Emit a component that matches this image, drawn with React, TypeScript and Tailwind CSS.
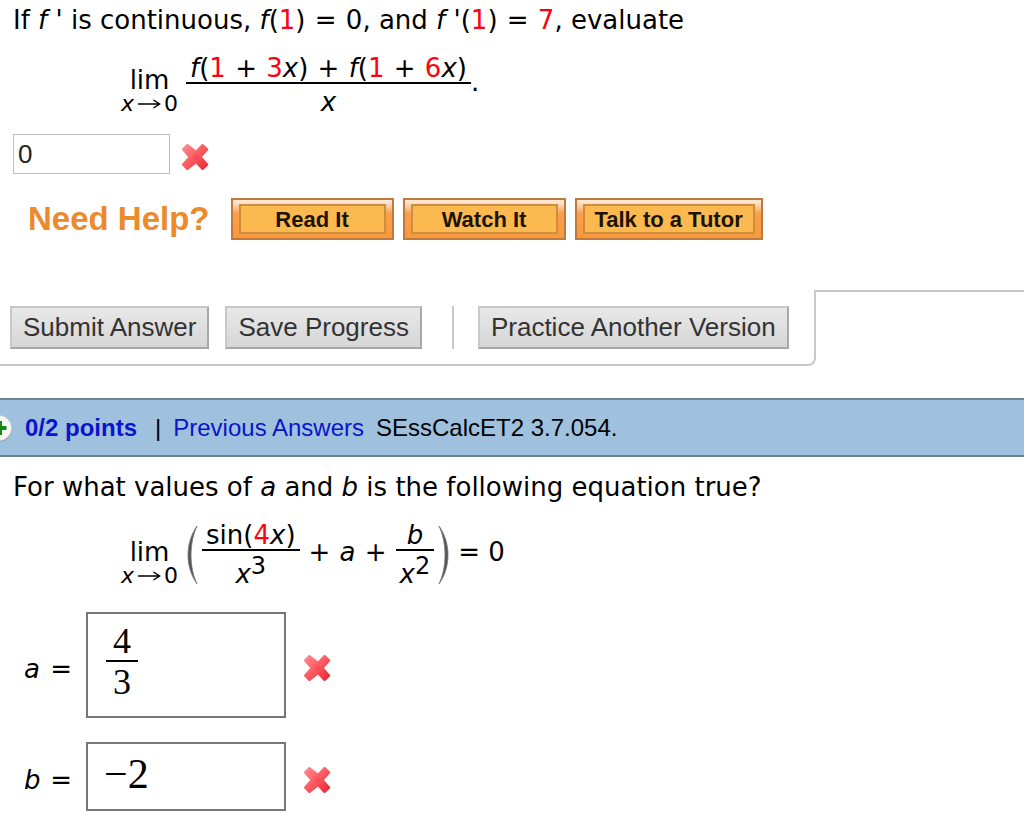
import React, { useState } from "react";

const R = ({ children }: { children: React.ReactNode }) => (
  <span className="text-[#ff0012]">{children}</span>
);

const Plus = () => <span className="mx-px">+</span>;

function WrongMark() {
  return (
    <svg viewBox="0 0 28 28" className="mt-1.5 w-7 h-7 shrink-0" role="img" aria-label="Incorrect">
      <defs>
        <linearGradient id="wrong" x1="0" y1="0" x2="1" y2="1">
          <stop offset="0" stopColor="#ff8c8f" />
          <stop offset="0.5" stopColor="#fb5a60" />
          <stop offset="1" stopColor="#ea2630" />
        </linearGradient>
      </defs>
      <path
        d="M5.4 2.2 L14 9 L20.6 2.2 L25 6.4 L18.4 14 L25 21.6 L20.6 25.8 L14 19 L5.4 25.8 L1.2 21.6 L7.8 14 L1.2 6.4 Z"
        fill="url(#wrong)"
        stroke="url(#wrong)"
        strokeWidth="2.4"
        strokeLinejoin="round"
      />
      <circle cx="13.5" cy="14" r="3" fill="#f4454d" opacity="0.5" />
    </svg>
  );
}

function Limit() {
  return (
    <div className="flex flex-col items-center">
      <span className="leading-6">lim</span>
      <span className="flex items-center gap-[3px] text-[22px] leading-6 whitespace-nowrap">
        <i>x</i>
        <svg viewBox="0 0 24 12" className="w-6 h-3" role="img" aria-label="approaches">
          <path d="M1 6h21M16.500 2l6 4-6 4" fill="none" stroke="#000" strokeWidth="1.5" />
        </svg>
        <span>0</span>
      </span>
    </div>
  );
}

function Fraction({ top, bottom }: { top: React.ReactNode; bottom: React.ReactNode }) {
  return (
    <div className="flex flex-col items-center text-center whitespace-nowrap">
      <div className="self-stretch border-b-2 border-black px-1 leading-7">{top}</div>
      <div className="px-1">{bottom}</div>
    </div>
  );
}

function Power({ exp }: { exp: number }) {
  return (
    <span className="block leading-[46px]">
      <i>x</i>
      <sup className="-top-[9px] text-2xl leading-none">{exp}</sup>
    </span>
  );
}

function Paren({ right }: { right?: boolean }) {
  return (
    <svg viewBox="0 0 12 60" className={right ? "mt-1 w-3 h-15 -scale-x-100" : "mt-1 w-3 h-15"} aria-hidden="true">
      <path d="M11 1 C-1 18 -1 42 11 59 C3 42 3 18 11 1 Z" fill="#555" stroke="#777" strokeWidth="0.8" />
    </svg>
  );
}

function HelpButton({ children, wide }: { children: React.ReactNode; wide?: boolean }) {
  return (
    <button
      type="button"
      className={`${wide ? "w-47" : "w-[163px]"} h-[42px] px-1.5 py-1 border-2 border-[#bd7a3e] bg-linear-to-b from-[#fde6d4] from-5% via-[#f9a04a] via-35% to-[#f9983c]`}
    >
      <span className="flex h-full items-center justify-center border-2 border-[#cc8f40] bg-[#fbb94f] pt-0.5 text-[22px] leading-6 font-bold text-[#1c1400] whitespace-nowrap">
        {children}
      </span>
    </button>
  );
}

function GrayButton({ children }: { children: React.ReactNode }) {
  return (
    <button
      type="button"
      className="h-[43px] px-[11px] pb-0.5 border-2 border-[#c8c8c8] border-r-[#a8a8a8] border-b-[#a8a8a8] bg-linear-to-b from-[#e8e8e8] to-[#d6d6d6] text-[26px] leading-9 text-[#333] whitespace-nowrap"
    >
      {children}
    </button>
  );
}

export default function App() {
  const [answer, setAnswer] = useState("0");
  const [num, setNum] = useState("4");
  const [den, setDen] = useState("3");
  const [b, setB] = useState("−2");

  return (
    <main className="min-h-screen bg-white text-black text-[26px] leading-10 font-['DejaVu_Sans',sans-serif]">
      {/* First question */}
      <section>
        <p className="px-[13px]">
          If <i>f</i> <i>'</i> is continuous, <i>f</i>(<R>1</R>) <span className="mx-px">=</span> 0, and <i>f</i> <i>'</i>(<R>1</R>) <span className="mx-px">=</span> <R>7</R>, evaluate
        </p>

        <div className="flex items-start pl-[121px] pt-[14px]">
          <div className="pt-[14px]">
            <Limit />
          </div>
          <div className="ml-2">
            <Fraction
              top={
                <>
                  <i>f</i>(<R>1</R> <Plus /> <R>3</R><i>x</i>) <Plus /> <i>f</i>(<R>1</R> <Plus /> <R>6</R><i>x</i>)
                </>
              }
              bottom={<i className="block leading-9">x</i>}
            />
          </div>
          <span className="pt-4 leading-6">.</span>
        </div>

        <div className="flex items-center gap-3 px-[13px] pt-[14px]">
          <input
            aria-label="Limit value"
            value={answer}
            onChange={(e) => setAnswer(e.target.value)}
            className="w-[157px] h-10 px-1 border border-[#bdbdbd] text-[26px] text-[#222] font-['Liberation_Sans',sans-serif] focus:outline-none"
          />
          <WrongMark />
        </div>

        <div className="flex items-center gap-[9px] pl-7 pt-6 font-['Liberation_Sans',sans-serif]">
          <h2 className="mr-3 text-[33px] font-bold text-[#ec8a2c] whitespace-nowrap">Need Help?</h2>
          <HelpButton>Read It</HelpButton>
          <HelpButton>Watch It</HelpButton>
          <HelpButton wide>Talk to a Tutor</HelpButton>
        </div>
      </section>

      {/* Actions */}
      <div className="mt-[50px] flex font-['Liberation_Sans',sans-serif]">
        <div className="flex items-center gap-4 pl-[10px] pr-[25px] pt-4 pb-[15px] border-r-2 border-b-2 border-[#c8c8c8] rounded-br-lg">
          <GrayButton>Submit Answer</GrayButton>
          <GrayButton>Save Progress</GrayButton>
          <div className="ml-[14px] mr-2 w-[2px] h-[43px] bg-[#c8c8c8]" />
          <GrayButton>Practice Another Version</GrayButton>
        </div>
        <div className="flex-1 border-t-2 border-[#c8c8c8]" />
      </div>

      {/* Question header */}
      <header className="mt-8 flex items-center h-[59px] border-y-2 border-[#6a8494] bg-[#9fc1de] text-2xl font-['Liberation_Sans',sans-serif] whitespace-nowrap overflow-hidden">
        <button type="button" aria-label="Expand" className="-ml-[15px] mr-3 shrink-0">
          <svg viewBox="0 0 28 28" className="w-7 h-7">
            <circle cx="14" cy="15" r="13" fill="#6f8ca3" opacity="0.5" />
            <circle cx="14" cy="14" r="12.6" fill="#f6f6f4" stroke="#c5ccd0" strokeWidth="0.8" />
            <path d="M11 7h6v5h4.500v4h-4.500v5h-6v-5H6.500v-4H11z" fill="#138a13" />
          </svg>
        </button>
        <b className="text-[#0a14cc]">0/2 points</b>
        <span className="ml-[18px]">|</span>
        <a href="#previous" className="ml-3 text-[#0a14cc]">Previous Answers</a>
        <span className="ml-3">SEssCalcET2 3.7.054.</span>
      </header>

      {/* Second question */}
      <section>
        <p className="px-[13px] pt-[10px]">
          For what values of <i>a</i> and <i>b</i> is the following equation true?
        </p>

        <div className="flex items-start pl-[121px] pt-[14px]">
          <div className="pt-[19px]">
            <Limit />
          </div>
          <div className="ml-2 flex items-start">
            <Paren />
            <div className="mx-1">
              <Fraction top={<>sin(<R>4</R><i>x</i>)</>} bottom={<Power exp={3} />} />
            </div>
            <span className="px-1 pt-[19px] leading-6"><Plus /> <i>a</i> <Plus /></span>
            <div className="mx-1">
              <Fraction top={<i>b</i>} bottom={<Power exp={2} />} />
            </div>
            <Paren right />
            <span className="px-2 pt-[19px] leading-6">= 0</span>
          </div>
        </div>

        <div className="mt-[15px] flex items-center pl-6">
          <label htmlFor="a-top" className="mr-[14px] flex w-12 justify-between pt-2"><i>a</i> <span>=</span></label>
          <div className="w-50 h-[106px] border-2 border-[#777] pl-[18px] pt-2 font-['Liberation_Serif',serif]">
            <div className="w-8">
              <input
                id="a-top"
                value={num}
                onChange={(e) => setNum(e.target.value)}
                className="block w-full h-10 text-center text-[36px] border-b-2 border-black focus:outline-none"
              />
              <input
                aria-label="a denominator"
                value={den}
                onChange={(e) => setDen(e.target.value)}
                className="block w-full h-10 text-center text-[36px] focus:outline-none"
              />
            </div>
          </div>
          <div className="ml-[18px]"><WrongMark /></div>
        </div>

        <div className="mt-6 flex items-center pl-6">
          <label htmlFor="b" className="mr-[14px] flex w-12 justify-between pt-1.5"><i>b</i> <span>=</span></label>
          <input
            id="b"
            value={b}
            onChange={(e) => setB(e.target.value)}
            className="w-50 h-[69px] border-2 border-[#777] px-4 pb-1.5 text-[42px] font-['Liberation_Serif',serif] focus:outline-none"
          />
          <div className="ml-[18px]"><WrongMark /></div>
        </div>
      </section>
    </main>
  );
}
